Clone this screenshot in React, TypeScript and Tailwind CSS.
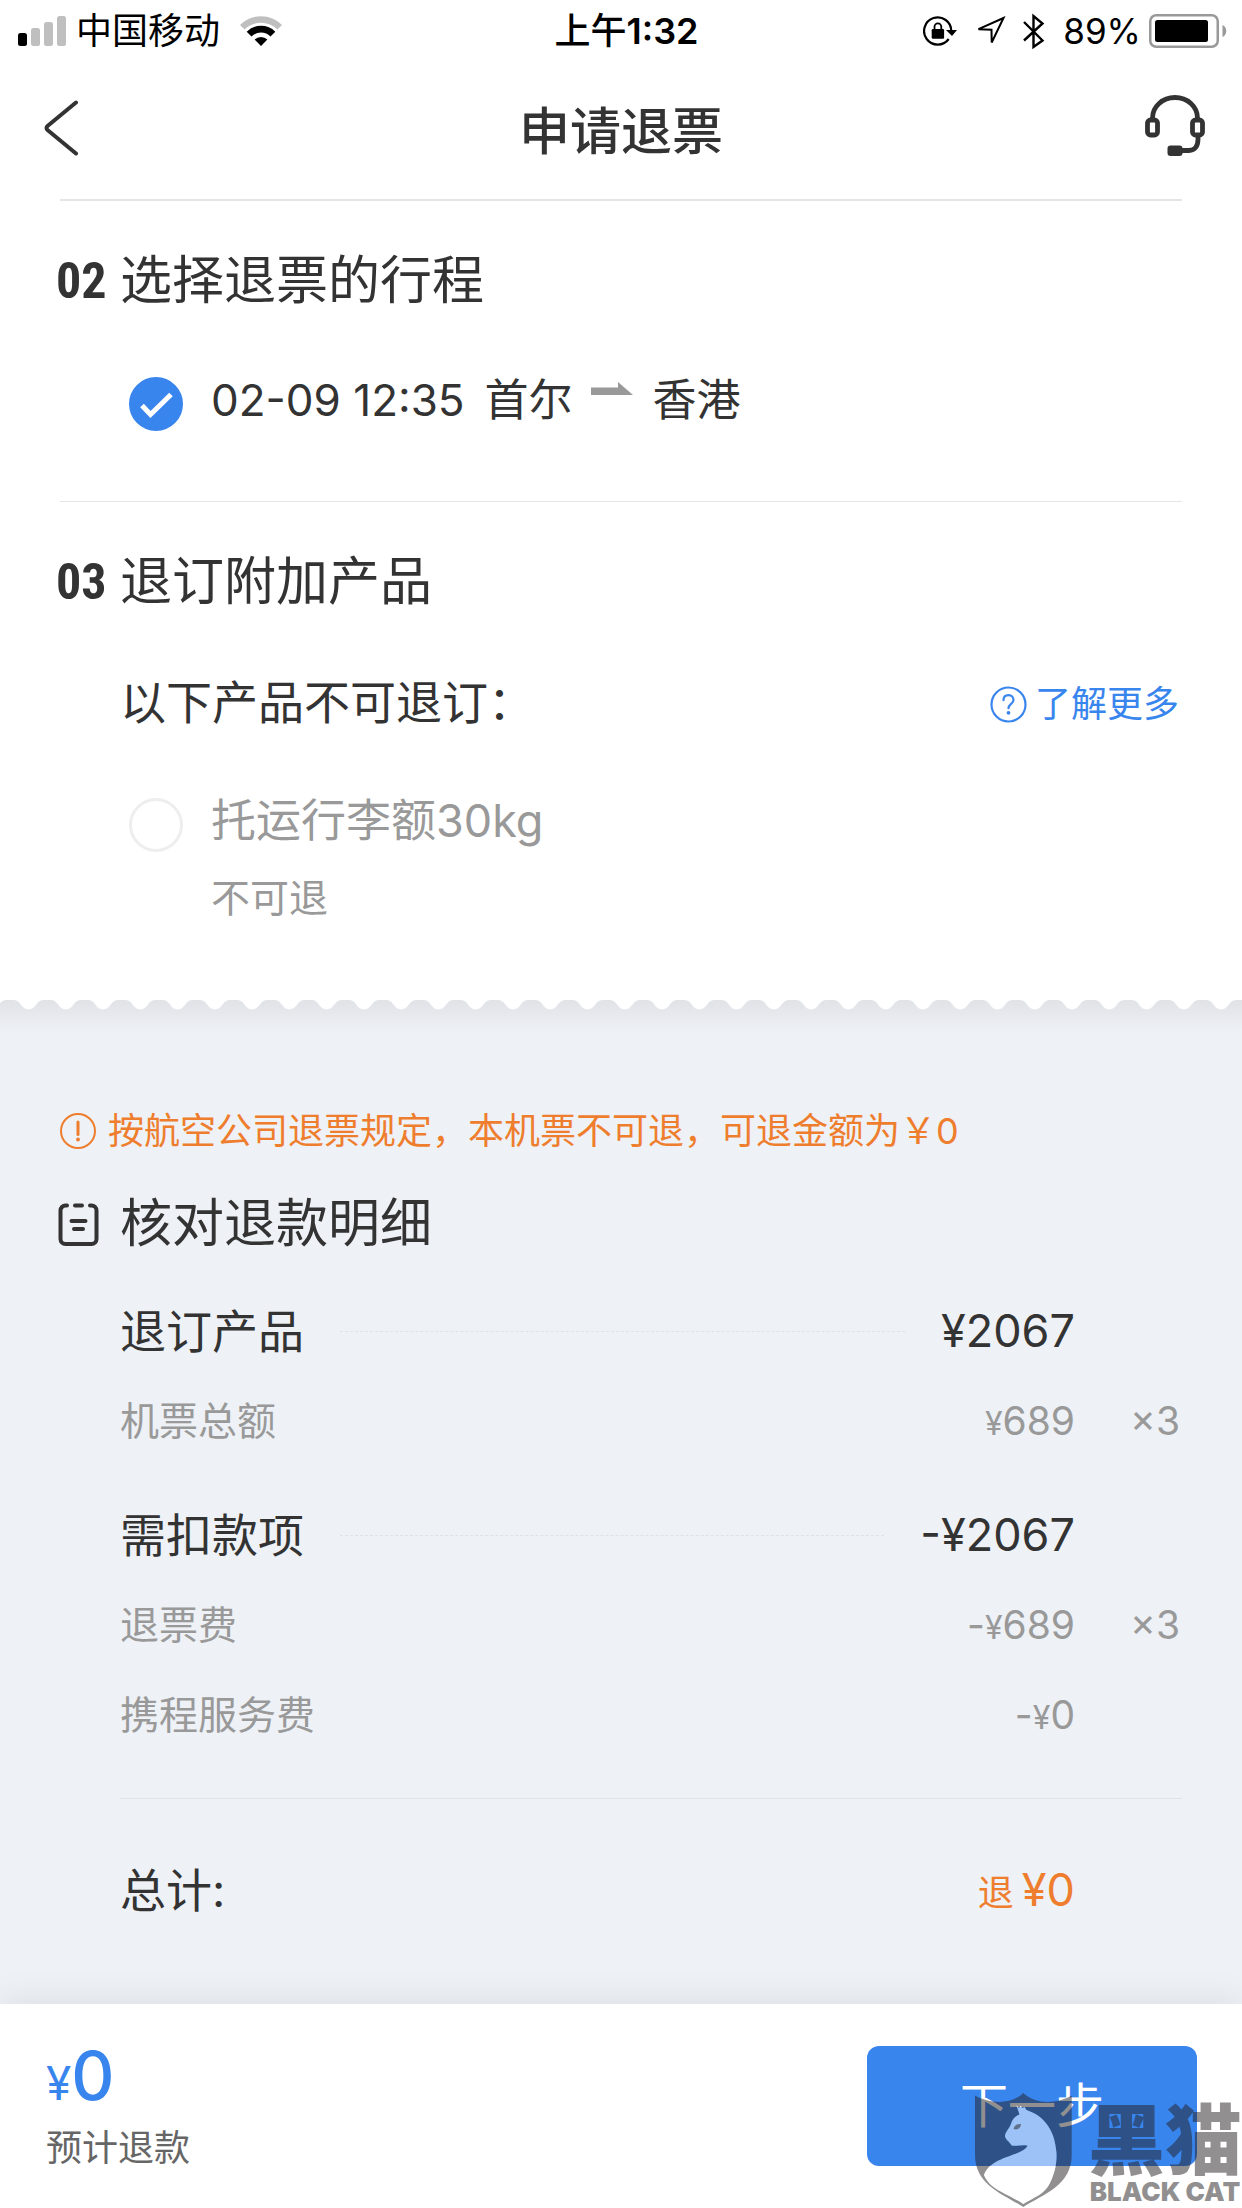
import React, { useId, useState } from 'react';

interface FeeItem {
  name: string;
  sign?: string;
  amount: number;
  count?: number;
}

interface FeeGroup {
  title: string;
  total: string;
  items: FeeItem[];
}

const feeGroups: FeeGroup[] = [
  {
    title: '退订产品',
    total: '¥2067',
    items: [{ name: '机票总额', amount: 689, count: 3 }],
  },
  {
    title: '需扣款项',
    total: '-¥2067',
    items: [
      { name: '退票费', sign: '-', amount: 689, count: 3 },
      { name: '携程服务费', sign: '-', amount: 0 },
    ],
  },
];

const StatusBar: React.FC = () => (
  <div className="grid h-[60px] grid-cols-[1fr_auto_1fr] items-center pt-0.5 pr-[15px] pl-[18px] text-[36px] leading-none text-black">
    <div className="flex items-center">
      <svg width="48" height="30" viewBox="0 0 48 30" aria-hidden="true">
        <rect x="0" y="17" width="9" height="13" rx="2.5" />
        <rect x="13" y="12" width="9" height="18" rx="2.5" fill="#bfbfbf" />
        <rect x="26" y="6" width="9" height="24" rx="2.5" fill="#bfbfbf" />
        <rect x="39" y="0" width="9" height="30" rx="2.5" fill="#bfbfbf" />
      </svg>
      <span className="ml-[10px]">中国移动</span>
      <svg className="ml-5" width="42" height="30" viewBox="0 0 42 30" aria-hidden="true">
        <path d="M2.3 11.3a26.5 26.5 0 0 1 37.4 0" fill="none" stroke="#bfbfbf" strokeWidth="6.5" />
        <path d="M9.1 18.1a16.8 16.8 0 0 1 23.8 0" fill="none" stroke="#000" strokeWidth="6.8" />
        <path d="M21 30l-6.4-6.4a9 9 0 0 1 12.8 0z" />
      </svg>
    </div>
    <span className="pl-2 font-semibold">
      <span className="font-medium">上午</span>1:32
    </span>
    <div className="flex items-center justify-end">
      <svg width="34" height="30" viewBox="0 0 34 30" aria-hidden="true">
        <path d="M28.3 15a13.6 13.6 0 1 0-2.6 8" fill="none" stroke="#000" strokeWidth="2.2" />
        <path d="M23 14h11l-5 6z" />
        <rect x="8.7" y="13" width="12.4" height="9.8" rx="1.2" />
        <path d="M11.5 14v-3.2a3.4 3.4 0 0 1 6.8 0V14" fill="none" stroke="#000" strokeWidth="1.8" />
      </svg>
      <svg className="ml-[19px]" width="30" height="30" viewBox="0 0 30 30" aria-hidden="true">
        <path d="M27.5 2L2.5 13.2l13 .6.2 12.7z" fill="none" stroke="#000" strokeWidth="2" />
      </svg>
      <svg className="ml-[17px]" width="22" height="37" viewBox="0 0 22 37" aria-hidden="true">
        <path d="M1 9l18.5 18.5L10.5 34V3l9 7.5L1 27.5" fill="none" stroke="#000" strokeWidth="2.4" />
      </svg>
      <span className="ml-[18px] text-[35px]">89%</span>
      <svg className="ml-2" width="78" height="34" viewBox="0 0 78 34" aria-hidden="true">
        <rect x="1.25" y="1.25" width="67.5" height="31.5" rx="6" fill="none" stroke="#999" strokeWidth="2.5" />
        <rect x="6" y="6" width="53" height="22" rx="2.5" />
        <path d="M73.5 11c5 2 5 10 0 12z" fill="#999" />
      </svg>
    </div>
  </div>
);

const Header: React.FC = () => (
  <header className="grid h-[139px] grid-cols-[1fr_auto_1fr] items-center px-9 pb-1">
    <button type="button" aria-label="返回" className="justify-self-start pl-2">
      <svg width="36" height="56" viewBox="0 0 36 56" fill="none" stroke="#333" strokeWidth="4" strokeLinecap="round" strokeLinejoin="round">
        <path d="M32 2.5L3.5 26q-2 2 0 4L32 53.5" />
      </svg>
    </button>
    <h1 className="pt-2 text-[51px] leading-[72px] font-medium">申请退票</h1>
    <button type="button" aria-label="客服" className="justify-self-end pb-1">
      <svg width="61" height="62" viewBox="0 0 61 62" fill="none" stroke="#333" strokeWidth="4.8">
        <path d="M7.5 25v-2C7.5 11.5 17.5 2.5 30 2.5S52.5 11.5 52.5 23v2" />
        <rect x="2.5" y="25" width="10" height="15" rx="3" />
        <rect x="47.5" y="25" width="10" height="15" rx="3" />
        <path d="M53 41v3c0 7-3 11.5-9 11.5h-7" />
        <rect x="22.5" y="50.5" width="15" height="10.5" rx="3" fill="#333" stroke="none" />
      </svg>
    </button>
  </header>
);

const SectionTitle: React.FC<{ mark: React.ReactNode; children: React.ReactNode }> = ({ mark, children }) => (
  <h2 className="-ml-1 flex items-center text-[52px] leading-[72px]">
    <span className="w-16 font-['Liberation_Sans_Narrow','Roboto_Condensed',Roboto,sans-serif] text-[50px] font-bold">{mark}</span>
    <span>{children}</span>
  </h2>
);

// scalloped paper edge between the form and the refund detail
const PaperEdge: React.FC = () => {
  const id = useId();
  return (
    <div className="h-8 bg-linear-to-b from-[#e0e2e6] to-[#eef1f6]">
      <svg className="block h-[10px] w-full" aria-hidden="true">
        <defs>
          <pattern id={id} x="9.9" y="0" width="37.27" height="10" patternUnits="userSpaceOnUse">
            <path d="M0 0h4C11 0 11 9.5 18.6 9.5S26.3 0 33.3 0h4z" fill="#fff" />
          </pattern>
        </defs>
        <rect width="100%" height="10" fill={`url(#${id})`} />
      </svg>
    </div>
  );
};

const Watermark: React.FC = () => (
  <div className="pointer-events-none absolute right-0 bottom-0 flex items-end gap-4 text-[#231f20]/50">
    <svg width="97" height="115" viewBox="0 0 97 115" aria-hidden="true">
      <path
        fill="currentColor"
        fillRule="evenodd"
        d="M0 2.5C15 11 36 12 48.3 0C61 12 82 11 96.7 2.5V62C96.7 92 69 101 48.3 114C28 101 0 92 0 62ZM41.5 12.5L44.5 21.5C40 23 37 27 36 31C34 36 30 39 30 43.5C31 47 34 48 36.7 52.5C42 53.5 47 51.5 52.7 52.7C46 64 16 63 9 82C15 97 32 100 48.3 111C58 105 70 101 75 90C80 79 82 70 81.5 60C80 40 72 24 51.5 17L49.5 14L47.5 15L45.5 13L44 15Z"
      />
      <path
        fill="#fff"
        fillOpacity="0.5"
        d="M41.5 12.5L44.5 21.5C40 23 37 27 36 31C34 36 30 39 30 43.5C31 47 34 48 36.7 52.5C42 53.5 47 51.5 52.7 52.7C46 64 16 63 9 82C15 97 32 100 48.3 111C58 105 70 101 75 90C80 79 82 70 81.5 60C80 40 72 24 51.5 17L49.5 14L47.5 15L45.5 13L44 15Z"
      />
      <path fill="currentColor" d="M38.5 36c1-4 4-5 7.5-5-.5 4-3 6.5-7.5 5z" />
    </svg>
    <div className="pb-1 text-center">
      <p className="text-[77px] leading-[78px] font-black">黑猫</p>
      <p className="text-[26px] leading-6 font-black whitespace-nowrap">BLACK CAT</p>
    </div>
  </div>
);

export default function App() {
  const [tripSelected, setTripSelected] = useState(true);

  return (
    <div className="flex min-h-screen flex-col bg-white font-[Inter,'Noto_Sans_CJK_SC',sans-serif] text-[#333]">
      <StatusBar />
      <Header />

      <main className="flex flex-1 flex-col">
        <div className="px-[60px]">
          <section className="border-t-2 border-[#e5e5e5] pt-11 pb-[70px]">
            <SectionTitle mark="02">选择退票的行程</SectionTitle>
            <label className="mt-14 flex items-start gap-7 pl-[69px]">
              <span className="mt-1 grid">
                <input
                  type="checkbox"
                  checked={tripSelected}
                  onChange={(e) => setTripSelected(e.target.checked)}
                  className="size-[54px] appearance-none rounded-full border-[3px] border-[#eee] [grid-area:1/1] checked:border-[#3985ee] checked:bg-[#3985ee]"
                />
                {tripSelected && (
                  <svg className="pointer-events-none [grid-area:1/1]" width="54" height="54" viewBox="0 0 54 54" fill="none" stroke="#fff" strokeWidth="5">
                    <path d="M13 28.5l8.5 9L42 17.5" />
                  </svg>
                )}
              </span>
              <span className="flex items-center text-[44px] leading-[54px]">
                <span>02-09 12:35</span>
                <span className="ml-5">首尔</span>
                <svg className="mr-5 mb-6 ml-[18px]" width="42" height="13" viewBox="0 0 42 13" role="img" aria-label="至">
                  <path d="M0 5.5h27V0l15 13H0z" fill="#999" />
                </svg>
                <span>香港</span>
              </span>
            </label>
          </section>

          <section className="border-t border-[#e5e5e5] pt-11 pb-[74px]">
            <SectionTitle mark="03">退订附加产品</SectionTitle>
            <div className="mt-[54px] flex items-center justify-between pr-[3px] pl-[60px]">
              <p className="text-[46px] leading-14">以下产品不可退订：</p>
              <a href="#more" className="flex items-center gap-2 pt-1 text-[36px] leading-14 text-[#3985ee]">
                <svg width="37" height="37" viewBox="0 0 37 37" fill="none" stroke="currentColor" strokeWidth="2.2" strokeLinecap="round" aria-hidden="true">
                  <circle cx="18.5" cy="18.5" r="17" />
                  <path d="M13.5 14.2c0-3 2-5 5-5s5 2 5 4.8c0 3.8-5 4-5 8.2" />
                  <circle cx="18.5" cy="26.8" r="0.8" fill="currentColor" />
                </svg>
                了解更多
              </a>
            </div>
            <label className="mt-[62px] flex items-start gap-7 pl-[69px] text-[#999]">
              <input type="checkbox" disabled className="mt-1 size-[54px] appearance-none rounded-full border-[3px] border-[#eee]" />
              <span>
                <span className="block text-[45px] leading-[54px]">托运行李额30kg</span>
                <span className="mt-[22px] block text-[39px] leading-14">不可退</span>
              </span>
            </label>
          </section>
        </div>

        <section className="flex-1 bg-[#eef1f6] pb-[74px]">
          <PaperEdge />
          <div className="px-[60px] pt-[72px]">
            <p className="flex items-center gap-3 text-[36px] leading-[54px] text-[#ee7e2e]">
              <svg width="36" height="36" viewBox="0 0 36 36" fill="none" stroke="currentColor" strokeWidth="2" aria-hidden="true">
                <circle cx="18" cy="18" r="17" />
                <path d="M18 9v12.5" strokeWidth="3" strokeLinecap="round" />
                <circle cx="18" cy="26.5" r="1.9" fill="currentColor" stroke="none" />
              </svg>
              按航空公司退票规定，本机票不可退，可退金额为￥0
            </p>
            <div className="mt-[30px]">
              <SectionTitle
                mark={
                  <svg className="ml-0.5" width="41" height="43" viewBox="0 0 40 43" fill="none" stroke="#333" strokeWidth="4" strokeLinecap="round" aria-hidden="true">
                    <path d="M8.5 2.5H7a5 5 0 0 0-5 5V36a5 5 0 0 0 5 5h26a5 5 0 0 0 5-5V7.5a5 5 0 0 0-5-5h-1.5" />
                    <path d="M16.5 2.5h7M13 18h14M15.5 26h9" />
                  </svg>
                }
              >
                核对退款明细
              </SectionTitle>
            </div>

            <div className="pt-0.5 pl-[60px]">
              <table className="w-full">
                <tbody>
                  {feeGroups.map((group) => (
                    <React.Fragment key={group.title}>
                      <tr className="h-[114px] text-[45px] leading-[60px]">
                        <th scope="row" className="w-[220px] pt-6 text-left text-[46px] font-normal whitespace-nowrap">{group.title}</th>
                        <td className="pt-6">
                          <div className="flex items-center gap-9">
                            <span className="flex-1 border-t border-dashed border-[#dfe3e6]" />
                            {group.total}
                          </div>
                        </td>
                        <td className="w-[107px]" />
                      </tr>
                      {group.items.map((item) => (
                        <tr key={item.name} className="h-[90px] text-[39px] leading-[60px] text-[#999]">
                          <th scope="row" className="text-left font-normal whitespace-nowrap">{item.name}</th>
                          <td className="text-right">
                            {item.sign}
                            <span className="text-[32px] leading-none">¥</span>
                            {item.amount}
                          </td>
                          <td className="pr-0.5 text-right">{item.count && `×${item.count}`}</td>
                        </tr>
                      ))}
                    </React.Fragment>
                  ))}
                </tbody>
              </table>
              <div className="mt-[38px] flex items-center justify-between border-t border-[#dfe3e8] pt-[55px] pr-[107px] pb-0.5 text-[46px] leading-[72px]">
                <span>总计:</span>
                <span className="flex items-baseline gap-2 text-[#ee7e2e]">
                  <span className="text-[36px] leading-none">退</span>
                  <span className="text-[45px]">¥0</span>
                </span>
              </div>
            </div>
          </div>
        </section>
      </main>

      <footer className="relative flex items-center justify-between bg-white py-[42px] pr-[45px] pl-[46px] shadow-[0_-4px_32px_rgba(0,0,0,0.08)]">
        <div>
          <p className="text-[67px] leading-[60px] font-medium text-[#3985ee]">
            <span className="text-[46px] leading-none font-normal">¥</span>0
          </p>
          <p className="mt-6 text-[36px] leading-9 text-[#666]">预计退款</p>
        </div>
        <button type="button" className="h-[120px] w-[330px] rounded-xl bg-[#3985ee] text-[48px] text-white">
          下一步
        </button>
        <Watermark />
      </footer>
    </div>
  );
}
